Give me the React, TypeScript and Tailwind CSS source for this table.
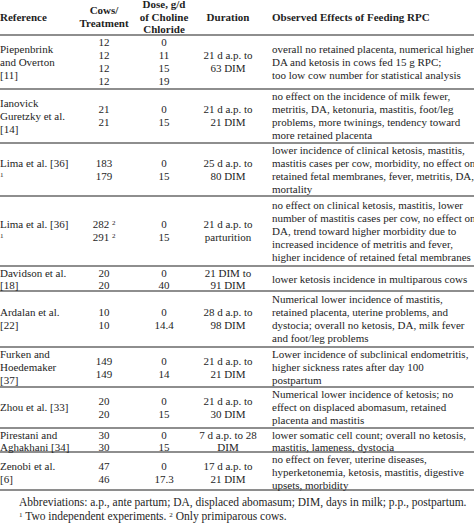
import React from "react";

interface Row {
  refs: React.ReactNode[];
  cows: React.ReactNode[];
  dose: string[];
  duration: string[];
  effects: string[];
  height: number;
  tight?: boolean;
}

// small raised marker, kept inside its own line box
const Sup: React.FC<{ n: string }> = ({ n }) => (
  <span className="relative -top-[3px] text-[7px] leading-none">{n}</span>
);

const rows: Row[] = [
  {
    refs: ["Piepenbrink", "and Overton", "[11]"],
    cows: ["12", "12", "12", "12"],
    dose: ["0", "11", "15", "19"],
    duration: ["21 d a.p. to", "63 DIM"],
    effects: [
      "overall no retained placenta, numerical higher",
      "DA and ketosis in cows fed 15 g RPC;",
      "too low cow number for statistical analysis",
    ],
    height: 54,
  },
  {
    refs: ["Ianovick", "Guretzky et al.", "[14]"],
    cows: ["21", "21"],
    dose: ["0", "15"],
    duration: ["21 d a.p. to", "21 DIM"],
    effects: [
      "no effect on the incidence of milk fewer,",
      "metritis, DA, ketonuria, mastitis, foot/leg",
      "problems, more twinings, tendency toward",
      "more retained placenta",
    ],
    height: 54,
  },
  {
    refs: ["Lima et al. [36]", <Sup key="s" n="1" />],
    cows: ["183", "179"],
    dose: ["0", "15"],
    duration: ["25 d a.p. to", "80 DIM"],
    effects: [
      "lower incidence of clinical ketosis, mastitis,",
      "mastitis cases per cow, morbidity, no effect on",
      "retained fetal membranes, fever, metritis, DA,",
      "mortality",
    ],
    height: 53,
  },
  {
    refs: ["Lima et al. [36]", <Sup key="s" n="1" />],
    cows: [
      <span key="a">
        282 <Sup n="2" />
      </span>,
      <span key="b">
        291 <Sup n="2" />
      </span>,
    ],
    dose: ["0", "15"],
    duration: ["21 d a.p. to", "parturition"],
    effects: [
      "no effect on clinical ketosis, mastitis, lower",
      "number of mastitis cases per cow, no effect on",
      "DA, trend toward higher morbidity due to",
      "increased incidence of metritis and fever,",
      "higher incidence of retained fetal membranes",
    ],
    height: 70,
  },
  {
    refs: ["Davidson et al.", "[18]"],
    cows: ["20", "20"],
    dose: ["0", "40"],
    duration: ["21 DIM to", "91 DIM"],
    effects: ["lower ketosis incidence in multiparous cows"],
    height: 25,
    tight: true,
  },
  {
    refs: ["Ardalan et al.", "[22]"],
    cows: ["10", "10"],
    dose: ["0", "14.4"],
    duration: ["28 d a.p. to", "98 DIM"],
    effects: [
      "Numerical lower incidence of mastitis,",
      "retained placenta, uterine problems, and",
      "dystocia; overall no ketosis, DA, milk fever",
      "and foot/leg problems",
    ],
    height: 56,
  },
  {
    refs: ["Furken and", "Hoedemaker", "[37]"],
    cows: ["149", "149"],
    dose: ["0", "14"],
    duration: ["21 d a.p. to", "21 DIM"],
    effects: [
      "Lower incidence of subclinical endometritis,",
      "higher sickness rates after day 100",
      "postpartum",
    ],
    height: 40,
  },
  {
    refs: ["Zhou et al. [33]"],
    cows: ["20", "20"],
    dose: ["0", "15"],
    duration: ["21 d a.p. to", "30 DIM"],
    effects: [
      "Numerical lower incidence of ketosis; no",
      "effect on displaced abomasum, retained",
      "placenta and mastitis",
    ],
    height: 41,
  },
  {
    refs: ["Pirestani and", "Aghakhani [34]"],
    cows: ["30", "30"],
    dose: ["0", "15"],
    duration: ["7 d a.p. to 28", "DIM"],
    effects: [
      "lower somatic cell count; overall no ketosis,",
      "mastitis, lameness, dystocia",
    ],
    height: 24,
    tight: true,
  },
  {
    refs: ["Zenobi et al.", "[6]"],
    cows: ["47", "46"],
    dose: ["0", "17.3"],
    duration: ["17 d a.p. to", "21 DIM"],
    effects: [
      "no effect on fever, uterine diseases,",
      "hyperketonemia, ketosis, mastitis, digestive",
      "upsets, morbidity",
    ],
    height: 38,
  },
];

const grid = "grid grid-cols-[80px_48px_72px_56px_1fr] items-center";

const Lines: React.FC<{ items: React.ReactNode[]; className?: string }> = ({
  items,
  className = "",
}) => (
  <div className={`flex flex-col whitespace-nowrap ${className}`}>
    {items.map((item, i) => (
      <div key={i}>{item}</div>
    ))}
  </div>
);

const App: React.FC = () => {
  return (
    <div
      className="w-[474px] h-[526px] overflow-hidden bg-white text-[#1e1e1e] text-[11px]"
      style={{ fontFamily: '"Liberation Serif", "Times New Roman", serif' }}
    >
      <div
        className={`${grid} h-[38px] -mt-[2px] border-b-2 border-[#8e8e8e] font-bold leading-[12.5px]`}
      >
        <div>Reference</div>
        <Lines items={["Cows/", "Treatment"]} className="items-center" />
        <Lines
          items={["Dose, g/d", "of Choline", "Chloride"]}
          className="items-center"
        />
        <div className="text-center">Duration</div>
        <div className="pl-4 whitespace-nowrap">
          Observed Effects of Feeding RPC
        </div>
      </div>

      {rows.map((row, i) => (
        <div
          key={i}
          className={`${grid} border-b-2 border-[#8e8e8e] ${
            row.tight ? "leading-[12px]" : "leading-[13px]"
          }`}
          style={{ height: row.height }}
        >
          <Lines items={row.refs} />
          <Lines items={row.cows} className="items-center" />
          <Lines items={row.dose} className="items-center" />
          <Lines items={row.duration} className="items-center" />
          <Lines items={row.effects} className="pl-4" />
        </div>
      ))}

      <div className="pl-[19px] pt-[4px] text-[11.5px] leading-[14px] whitespace-nowrap">
        <div>
          Abbreviations: a.p., ante partum; DA, displaced abomasum; DIM, days in
          milk; p.p., postpartum.
        </div>
        <div>
          <Sup n="1" /> Two independent experiments. <Sup n="2" /> Only
          primiparous cows.
        </div>
      </div>
    </div>
  );
};

export default App;
